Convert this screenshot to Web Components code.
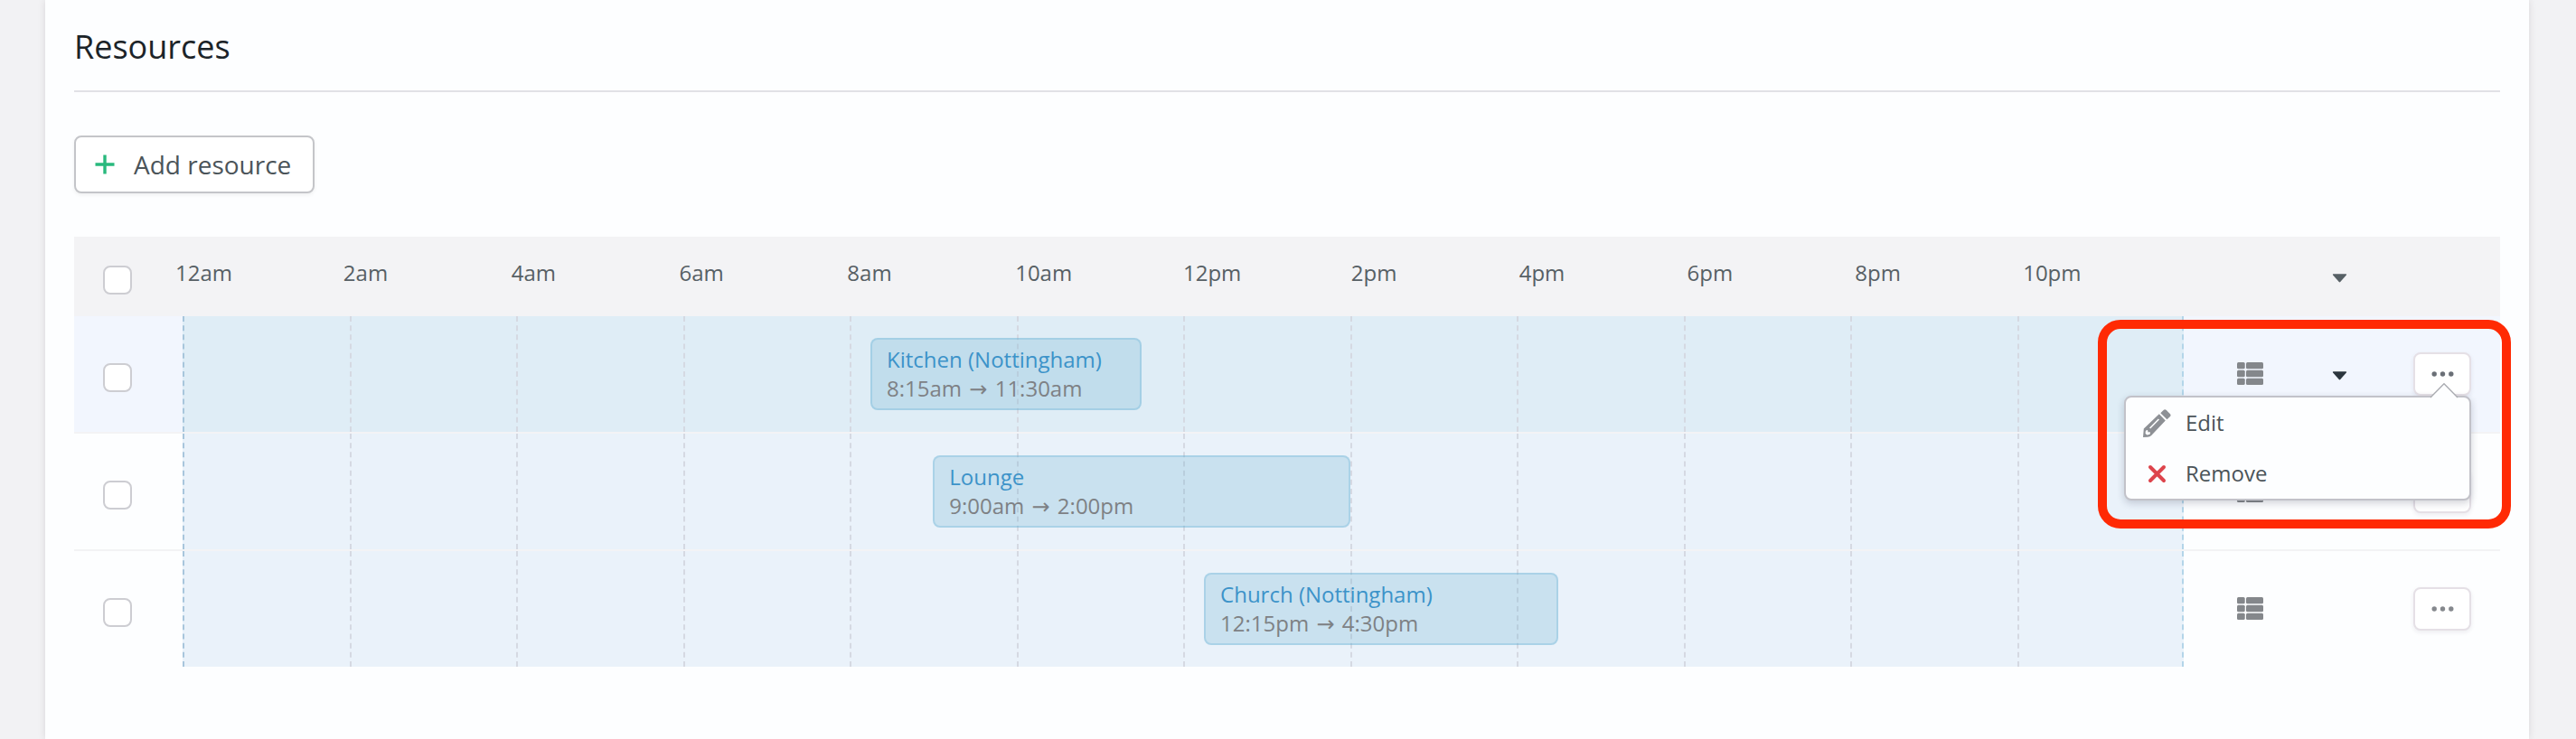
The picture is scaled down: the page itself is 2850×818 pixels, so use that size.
<!DOCTYPE html>
<html lang="en">
<head>
<meta charset="utf-8">
<title>Resources</title>
<style>
  body {
    margin: 0;
    background: #f2f2f4;
    font-family: "Open Sans", "DejaVu Sans", sans-serif;
    font-size: 24px;
    color: #4b5459;
  }
</style>
</head>
<body>
<resource-panel>
  <span slot="title">Resources</span>
  <add-button>Add resource</add-button>
  <resource-table>
    <time-header slot="header"></time-header>
    <resource-row active>
      <time-slot start="8.25" end="11.5">Kitchen (Nottingham)<span slot="time">8:15am → 11:30am</span></time-slot>
      <action-menu slot="menu">
        <menu-item>
          <svg slot="icon" width="31" height="31" viewBox="0 0 31 31">
            <path fill="#8d9095" fill-rule="evenodd" d="M0 31 .8 21.600 17.800 5.300 24.800 12.500 9.200 29.100Q7.500 30.700 5 30.700ZM2.800 24.300 2.600 27 4.500 28.500 7.500 27.800Q8.300 26.500 7.600 25L5.600 25.600 5 23Q3.700 22.800 2.800 24.300ZM7 20.400 16.800 10.400 18 11.600 8.200 21.600Z"/>
            <path fill="#8d9095" d="M19.300 4.200 22.600.9Q24.200-.5 25.800 1L30 5.200Q31.200 6.600 30 8L26.500 11.300Z"/>
          </svg>
          Edit
        </menu-item>
        <menu-item>
          <svg slot="icon" width="31" height="31" viewBox="0 0 31 31">
            <path stroke="#dd444c" stroke-width="4" stroke-linecap="round" d="M8 8 23 23M23 8 8 23"/>
          </svg>
          Remove
        </menu-item>
      </action-menu>
    </resource-row>
    <resource-row>
      <time-slot start="9" end="14">Lounge<span slot="time">9:00am → 2:00pm</span></time-slot>
    </resource-row>
    <resource-row>
      <time-slot start="12.25" end="16.5">Church (Nottingham)<span slot="time">12:15pm → 4:30pm</span></time-slot>
    </resource-row>
  </resource-table>
</resource-panel>

<script>
class ResourcePanel extends HTMLElement {
  constructor() {
    super()
    this.attachShadow({ mode: 'open' })
    this.shadowRoot.innerHTML = `
      <style>
        :host {
          display: block;
          box-sizing: border-box;
          height: 818px;
          margin: 0 52px 0 50px;
          padding: 28px 32px 0;
          background: #fdfeff;
          box-shadow: 0 0 8px rgba(60, 40, 50, 0.13);
        }
        h1 {
          margin: 0 0 48px;
          padding-bottom: 24px;
          border-bottom: 2px solid #e1e1e6;
          color: #1c2429;
          font-size: 36px;
          font-weight: 400;
          line-height: 48px;
        }
      </style>
      <h1><slot name="title"></slot></h1>
      <slot></slot>
    `
  }
}

class AddButton extends HTMLElement {
  constructor() {
    super()
    this.attachShadow({ mode: 'open' })
    this.shadowRoot.innerHTML = `
      <style>
        :host {
          display: flex;
          align-items: center;
          gap: 21px;
          box-sizing: border-box;
          width: 266px;
          height: 64px;
          padding-left: 21px;
          border: 2px solid #c4c5c9;
          border-radius: 8px;
          background: #fff;
          box-shadow: 0 2px 4px rgba(0, 0, 0, 0.06);
          font-size: 28px;
          white-space: nowrap;
        }
      </style>
      <svg width="22" height="22" viewBox="0 0 22 22">
        <path stroke="#29b97d" stroke-width="3.400" d="M11 .5V21.500M.5 11H21.500"/>
      </svg>
      <slot></slot>
    `
  }
}

class ResourceTable extends HTMLElement {
  constructor() {
    super()
    this.attachShadow({ mode: 'open' })
    this.shadowRoot.innerHTML = `
      <style>
        :host {
          display: block;
          margin-top: 48px;
        }
      </style>
      <slot name="header"></slot>
      <slot></slot>
    `
  }
}

class CheckBox extends HTMLElement {
  constructor() {
    super()
    this.attachShadow({ mode: 'open' })
    this.shadowRoot.innerHTML = `
      <style>
        :host {
          display: block;
          box-sizing: border-box;
          width: 32px;
          height: 32px;
          margin: 8px 0 0 32px;
          border: 2px solid #cdcdd2;
          border-radius: 8px;
          background: #fff;
        }
      </style>
    `
  }
}

class CaretDown extends HTMLElement {
  constructor() {
    super()
    this.attachShadow({ mode: 'open' })
    this.shadowRoot.innerHTML = `
      <style>
        :host { display: block; height: 10px; }
        svg { display: block; }
      </style>
      <svg width="17" height="10" viewBox="0 0 18 10" preserveAspectRatio="none">
        <path fill="currentColor" d="M1.500.3H16.500Q17.600.5 16.800 1.500L9.800 9Q9 9.800 8.200 9L1.200 1.500Q.4.500 1.500.3Z"/>
      </svg>
    `
  }
}

class TimeHeader extends HTMLElement {
  constructor() {
    super()
    this.attachShadow({ mode: 'open' })
    const labels = ['12am', '2am', '4am', '6am', '8am', '10am', '12pm', '2pm', '4pm', '6pm', '8pm', '10pm']
    this.shadowRoot.innerHTML = `
      <style>
        :host {
          display: grid;
          grid-template-columns: 112px 2230px 139px 51px;
          align-items: center;
          height: 88px;
          background: #f3f3f5;
          color: #576065;
        }
        .hours {
          display: grid;
          grid-template-columns: repeat(12, 1fr);
          padding-bottom: 8px;
          line-height: 32px;
        }
        caret-down { grid-column: 4; justify-self: center; margin-top: 3px; }
      </style>
      <check-box></check-box>
      <div class="hours">${labels.map(l => `<span>${l}</span>`).join('')}</div>
      <caret-down></caret-down>
    `
  }
}

class ResourceRow extends HTMLElement {
  constructor() {
    super()
    this.attachShadow({ mode: 'open' })
    this.shadowRoot.innerHTML = `
      <style>
        :host {
          display: grid;
          grid-template-columns: 120px 2214px 147px 51px 120px;
          align-items: center;
          height: 128px;
          border-bottom: 2px solid #f3f3f5;
          --band: #eaf2fa;
        }
        :host(:last-child) { border-bottom: 0; }
        :host([active]) {
          background: #f2f6fe;
          --band: #dfedf6;
        }
        /* one column per quarter of an hour */
        .band {
          display: grid;
          grid-template-columns: repeat(96, 1fr);
          grid-template-rows: 128px;
          align-items: center;
          background: var(--band);
        }
        .line {
          grid-row: 1;
          align-self: stretch;
          border-left: 2px dashed #d5d9e2;
        }
        .line:first-child { border-left-color: #a8c6dc; }
        .line:nth-child(12) { border-right: 2px dashed #b3d5e9; }
        svg { display: block; }
        .list { justify-self: center; margin-top: -1px; }
        caret-down { justify-self: center; margin-top: 3px; color: #2c363d; visibility: hidden; }
        :host([active]) caret-down { visibility: visible; }
        .more {
          position: relative;
          display: flex;
          align-items: center;
          justify-content: center;
          box-sizing: border-box;
          width: 64px;
          height: 48px;
          margin-left: 56px;
          border: 2px solid #e5e0e6;
          border-radius: 8px;
          background: #fff;
          box-shadow: 0 2px 5px rgba(40, 30, 70, 0.08);
          color: #85888d;
        }
        :host([active]) .more { color: #6a6f76; }
        .more svg { margin-top: -1px; }
        slot[name="menu"]::slotted(*) {
          position: absolute;
          z-index: 2;
          top: 46px;
          right: -2px;
        }
      </style>
      <check-box></check-box>
      <div class="band">
        ${Array.from({ length: 12 }, (_, i) => `<i class="line" style="grid-column: ${i * 8 + 1} / span 8"></i>`).join('')}
        <slot></slot>
      </div>
      <svg class="list" width="29" height="25" viewBox="0 0 29 25" fill="#84878b">
        <rect width="8.700" height="7.300" rx="1.500"/><rect x="10" width="19" height="7.300" rx="1.500"/>
        <rect y="8.850" width="8.700" height="7.300" rx="1.500"/><rect x="10" y="8.850" width="19" height="7.300" rx="1.500"/>
        <rect y="17.700" width="8.700" height="7.300" rx="1.500"/><rect x="10" y="17.700" width="19" height="7.300" rx="1.500"/>
      </svg>
      <caret-down></caret-down>
      <div class="more">
        <svg width="25" height="6" viewBox="0 0 25 6" fill="currentColor">
          <circle cx="3.200" cy="3" r="2.700"/><circle cx="12.500" cy="3" r="2.700"/><circle cx="21.800" cy="3" r="2.700"/>
        </svg>
        <slot name="menu"></slot>
      </div>
    `
  }
}

class TimeSlot extends HTMLElement {
  constructor() {
    super()
    this.attachShadow({ mode: 'open' })
    this.shadowRoot.innerHTML = `
      <style>
        :host {
          display: block;
          grid-row: 1;
          box-sizing: border-box;
          height: 80px;
          padding: 6px 16px 0;
          border: 2px solid rgba(95, 175, 212, 0.3);
          border-radius: 8px;
          background: rgba(103, 174, 206, 0.25);
          color: #3c93c9;
          line-height: 32px;
          white-space: nowrap;
        }
        .time {
          color: #7e8185;
          word-spacing: 2px;
        }
      </style>
      <div><slot></slot></div>
      <div class="time"><slot name="time"></slot></div>
    `
  }

  connectedCallback() {
    const start = this.getAttribute('start') * 4 + 1
    const end = this.getAttribute('end') * 4 + 1
    this.style.gridColumn = `${start} / ${end}`
  }
}

class ActionMenu extends HTMLElement {
  constructor() {
    super()
    this.attachShadow({ mode: 'open' })
    this.shadowRoot.innerHTML = `
      <style>
        :host {
          display: block;
          box-sizing: border-box;
          width: 384px;
          border: 2px solid #c2c2c9;
          border-radius: 8px;
          background: #fdfeff;
          box-shadow: 0 3px 8px rgba(30, 35, 60, 0.2);
          color: #4b5459;
        }
        .pointer {
          position: absolute;
          top: -17px;
          right: 12px;
        }
      </style>
      <svg class="pointer" width="32" height="18" viewBox="0 0 32 18">
        <path fill="#fdfeff" d="M0 18 16 2 32 18Z"/>
        <path fill="none" stroke="#a9abb0" stroke-width="1.300" d="M1 17 16 1.800 31 17"/>
      </svg>
      <slot></slot>
    `
  }
}

class MenuItem extends HTMLElement {
  constructor() {
    super()
    this.attachShadow({ mode: 'open' })
    this.shadowRoot.innerHTML = `
      <style>
        :host {
          display: flex;
          align-items: center;
          gap: 16px;
          height: 56px;
          padding-left: 19px;
        }
        div { padding-bottom: 2px; }
      </style>
      <slot name="icon"></slot>
      <div><slot></slot></div>
    `
  }
}

/* red frame drawn over the row's actions */
class HighlightFrame extends HTMLElement {
  constructor() {
    super()
    this.attachShadow({ mode: 'open' })
    this.shadowRoot.innerHTML = `
      <style>
        :host {
          position: absolute;
          z-index: 3;
          top: 354px;
          left: 2321px;
          box-sizing: border-box;
          width: 457px;
          height: 231px;
          border: 10px solid #ff2a04;
          border-radius: 25px;
        }
      </style>
    `
  }
}

customElements.define('check-box', CheckBox)
customElements.define('caret-down', CaretDown)
customElements.define('resource-panel', ResourcePanel)
customElements.define('add-button', AddButton)
customElements.define('resource-table', ResourceTable)
customElements.define('time-header', TimeHeader)
customElements.define('resource-row', ResourceRow)
customElements.define('time-slot', TimeSlot)
customElements.define('action-menu', ActionMenu)
customElements.define('menu-item', MenuItem)
customElements.define('highlight-frame', HighlightFrame)

document.body.append(document.createElement('highlight-frame'))
</script>
</body>
</html>
